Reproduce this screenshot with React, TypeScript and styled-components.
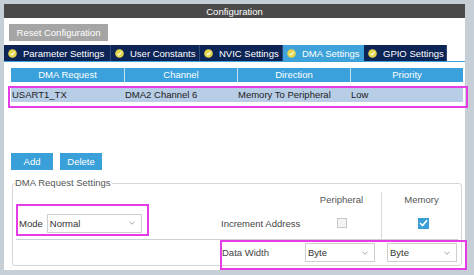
import React from "react";
import styled, { createGlobalStyle } from "styled-components";

const GlobalStyle = createGlobalStyle`
  html, body { margin: 0; padding: 0; background: #c6ced6; }
  body { font-family: "Liberation Sans", Arial, sans-serif; font-size: 9.5px; color: #222; }
  #root { width: 474px; height: 275px; overflow: hidden; }
  * { box-sizing: border-box; }
`;

const Root = styled.div`
  padding: 4px 0 0 4px;
  width: 474px;
  height: 275px;
`;

const Panel = styled.div`
  position: relative;
  width: 461px;
  height: 266px;
  background: #ffffff;
`;

const TitleBar = styled.div`
  height: 14px;
  background: #4a4a4a;
  color: #ffffff;
  display: flex;
  align-items: center;
  justify-content: center;
  font-size: 9.5px;
`;

const Toolbar = styled.div`
  display: flex;
  padding: 6px 0 0 5px;
`;

const GrayButton = styled.button`
  width: 99px;
  height: 17px;
  border: none;
  padding: 0;
  background: #a5a5a5;
  color: #ffffff;
  font: inherit;
`;

const TabBar = styled.div`
  display: flex;
  margin-top: 4px;
  height: 17px;
  border-bottom: 1px solid #3aa1da;
`;

const Tab = styled.div<{ $w: number; $active?: boolean }>`
  width: ${(p) => p.$w}px;
  height: 16px;
  display: flex;
  align-items: center;
  gap: 6px;
  padding-left: 4px;
  background: ${(p) => (p.$active ? "#3ea3da" : "#0c2456")};
  border-right: 1px solid ${(p) => (p.$active ? "#3ea3da" : "#2f4a78")};
  color: #ffffff;
  white-space: nowrap;
`;

const Table = styled.div`
  margin: 6px 0 0 7px;
  width: 452px;
`;

const HeaderRow = styled.div`
  display: grid;
  grid-template-columns: repeat(4, 113px);
  height: 14px;
  background: #3aa1dc;
  color: #ffffff;
`;

const HeaderCell = styled.div<{ $first?: boolean }>`
  text-align: center;
  line-height: 14px;
  border-left: ${(p) => (p.$first ? "none" : "1px solid rgba(255,255,255,0.7)")};
`;

const DataRow = styled.div`
  display: grid;
  grid-template-columns: repeat(4, 113px);
  margin-top: 5px;
  height: 15px;
  background: #b8cde6;
  color: #222;
`;

const DataCell = styled.div`
  line-height: 15px;
  padding-left: 1px;
  white-space: nowrap;
`;

const ButtonRow = styled.div`
  display: flex;
  gap: 7px;
  margin-top: 51px;
  padding-left: 7px;
`;

const BlueButton = styled.button`
  width: 42px;
  height: 17px;
  border: none;
  padding: 0;
  background: #3aa0da;
  color: #ffffff;
  font: inherit;
`;

const Group = styled.div`
  position: relative;
  margin: 13px 0 0 8px;
  width: 450px;
  height: 83px;
  border: 1px solid #d6d6d6;
  border-radius: 3px;
  padding-top: 8px;
`;

const Legend = styled.span`
  position: absolute;
  top: -7px;
  left: 2px;
  line-height: 12px;
  background: #ffffff;
  color: #555555;
  padding-right: 1px;
`;

const SettingsGrid = styled.div`
  display: grid;
  grid-template-columns: 206px 83px 79px 80px;
  grid-template-rows: 15px 32px 1px 25px;
  align-items: center;
`;

const ColHead = styled.div<{ $divider?: boolean }>`
  align-self: stretch;
  display: flex;
  align-items: center;
  justify-content: center;
  color: #555555;
  border-left: ${(p) => (p.$divider ? "1px solid #d8d8d8" : "none")};
`;

const CheckCell = styled.div<{ $divider?: boolean }>`
  align-self: stretch;
  display: flex;
  align-items: center;
  justify-content: center;
  padding-left: ${(p) => (p.$divider ? "4px" : "0")};
  border-left: ${(p) => (p.$divider ? "1px solid #d8d8d8" : "none")};
`;

const ModeCell = styled.div`
  display: flex;
  align-items: center;
  gap: 4px;
  padding-left: 6px;
  color: #333333;
`;

const FieldLabel = styled.div<{ $pad: number }>`
  padding-left: ${(p) => p.$pad}px;
  color: #444444;
  white-space: nowrap;
`;

const Divider = styled.div`
  grid-column: 1 / -1;
  height: 1px;
  margin: 0 3px;
  background: #c9d0d6;
`;

const SelectBox = styled.div<{ $w: number; $ml?: number }>`
  width: ${(p) => p.$w}px;
  height: 19px;
  margin-left: ${(p) => p.$ml ?? 0}px;
  display: flex;
  align-items: center;
  justify-content: space-between;
  padding: 0 6px 0 2px;
  border: 1px solid #cfcfcf;
  background: #ffffff;
  color: #333333;
`;

const Box = styled.div`
  width: 10px;
  height: 10px;
  border: 1px solid #c8c8c8;
  background: #f3f3f3;
`;

const Checked = styled.div`
  width: 11px;
  height: 11px;
  background: #3a9fd8;
  display: flex;
  align-items: center;
  justify-content: center;
`;

const Highlight = styled.div<{ $l: number; $t: number; $w: number; $h: number }>`
  position: absolute;
  left: ${(p) => p.$l}px;
  top: ${(p) => p.$t}px;
  width: ${(p) => p.$w}px;
  height: ${(p) => p.$h}px;
  border: 2px solid #e63ce6;
  pointer-events: none;
`;

const TabIcon = () => (
  <svg width="9" height="9" viewBox="0 0 9 9">
    <circle cx="4.5" cy="4.5" r="4.3" fill="#e3d54c" />
    <path d="M2.4 4.6 L3.9 6 L6.6 3" stroke="#fffbe0" strokeWidth="1.2" fill="none" />
  </svg>
);

const Chevron = () => (
  <svg width="6" height="4" viewBox="0 0 6 4">
    <path d="M0.5 0.8 L3 3.2 L5.5 0.8" stroke="#9a9a9a" strokeWidth="0.9" fill="none" />
  </svg>
);

const Select = ({ value, w, ml }: { value: string; w: number; ml?: number }) => (
  <SelectBox $w={w} $ml={ml}>
    <span>{value}</span>
    <Chevron />
  </SelectBox>
);

const tabs = [
  { label: "Parameter Settings", w: 107 },
  { label: "User Constants", w: 89 },
  { label: "NVIC Settings", w: 83 },
  { label: "DMA Settings", w: 81, active: true },
  { label: "GPIO Settings", w: 83 },
];

export default function App() {
  return (
    <>
      <GlobalStyle />
      <Root>
        <Panel>
          <TitleBar>Configuration</TitleBar>
          <Toolbar>
            <GrayButton>Reset Configuration</GrayButton>
          </Toolbar>
          <TabBar>
            {tabs.map((t) => (
              <Tab key={t.label} $w={t.w} $active={t.active}>
                <TabIcon />
                {t.label}
              </Tab>
            ))}
          </TabBar>
          <Table>
            <HeaderRow>
              <HeaderCell $first>DMA Request</HeaderCell>
              <HeaderCell>Channel</HeaderCell>
              <HeaderCell>Direction</HeaderCell>
              <HeaderCell>Priority</HeaderCell>
            </HeaderRow>
            <DataRow>
              <DataCell>USART1_TX</DataCell>
              <DataCell>DMA2 Channel 6</DataCell>
              <DataCell>Memory To Peripheral</DataCell>
              <DataCell>Low</DataCell>
            </DataRow>
          </Table>
          <ButtonRow>
            <BlueButton>Add</BlueButton>
            <BlueButton>Delete</BlueButton>
          </ButtonRow>
          <Group>
            <Legend>DMA Request Settings</Legend>
            <SettingsGrid>
              <div />
              <div />
              <ColHead>Peripheral</ColHead>
              <ColHead $divider>Memory</ColHead>

              <ModeCell>
                <span>Mode</span>
                <Select value="Normal" w={95} />
              </ModeCell>
              <FieldLabel $pad={2}>Increment Address</FieldLabel>
              <CheckCell>
                <Box />
              </CheckCell>
              <CheckCell $divider>
                <Checked>
                  <svg width="9" height="8" viewBox="0 0 9 8">
                    <path d="M1 4 L3.5 6.5 L8 1.2" stroke="#ffffff" strokeWidth="1.6" fill="none" />
                  </svg>
                </Checked>
              </CheckCell>

              <Divider />

              <div />
              <FieldLabel $pad={3}>Data Width</FieldLabel>
              <Select value="Byte" w={70} ml={3} />
              <Select value="Byte" w={70} ml={6} />
            </SettingsGrid>
          </Group>
          <Highlight $l={4} $t={82} $w={460} $h={22} />
          <Highlight $l={12} $t={200} $w={133} $h={32} />
          <Highlight $l={216} $t={236} $w={247} $h={30} />
        </Panel>
      </Root>
    </>
  );
}
